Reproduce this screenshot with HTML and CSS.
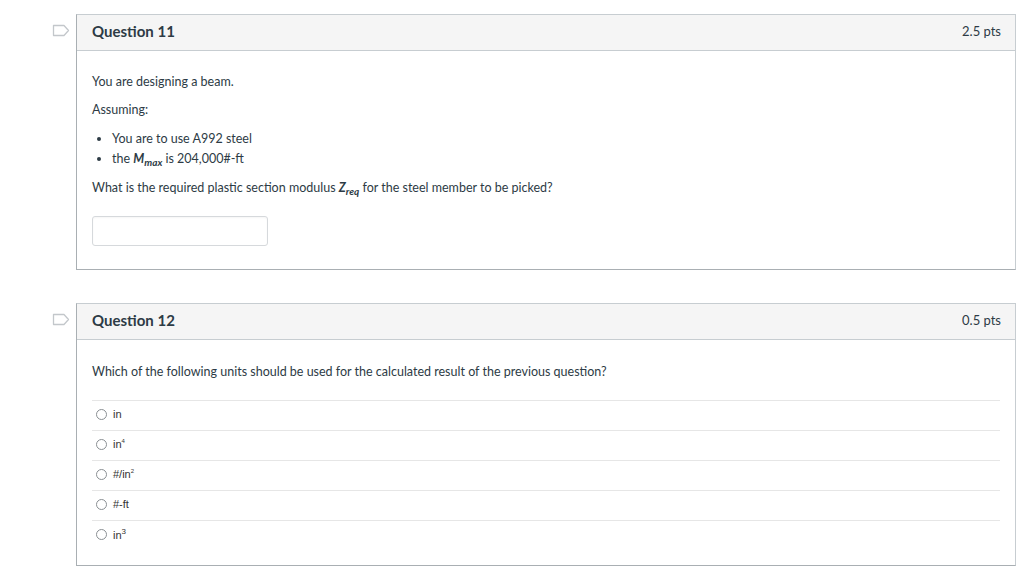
FILE: index.html
```html
<!DOCTYPE html>
<html>
<head>
<meta charset="utf-8">
<link rel="stylesheet" href="styles.css">
</head>
<body>
<div class="page">
  <div class="question q11">
    <div class="flag">
      <svg width="18" height="13" viewBox="0 0 18 13"><path d="M1.5 1.5 H12 L16.5 6.5 L12 11.5 H1.5 Z" fill="none" stroke="#c3c7cb" stroke-width="1.3" stroke-linejoin="round"/></svg>
    </div>
    <div class="card">
      <div class="card-header">
        <span class="title">Question 11</span>
        <span class="pts">2.5 pts</span>
      </div>
      <div class="card-body">
        <p>You are designing a beam.</p>
        <p>Assuming:</p>
        <ul>
          <li>You are to use A992 steel</li>
          <li>the <i class="var">M<sub>max</sub></i> is 204,000#-ft</li>
        </ul>
        <p>What is the required plastic section modulus <i class="var">Z<sub>req</sub></i> for the steel member to be picked?</p>
        <div class="answer-input"></div>
      </div>
    </div>
  </div>

  <div class="question q12">
    <div class="flag">
      <svg width="18" height="13" viewBox="0 0 18 13"><path d="M1.5 1.5 H12 L16.5 6.5 L12 11.5 H1.5 Z" fill="none" stroke="#c3c7cb" stroke-width="1.3" stroke-linejoin="round"/></svg>
    </div>
    <div class="card">
      <div class="card-header">
        <span class="title">Question 12</span>
        <span class="pts">0.5 pts</span>
      </div>
      <div class="card-body body2">
        <p>Which of the following units should be used for the calculated result of the previous question?</p>
        <div class="options">
          <div class="option"><span class="radio"></span><span class="opt-text">in</span></div>
          <div class="option"><span class="radio"></span><span class="opt-text">in<sup class="tiny">4</sup></span></div>
          <div class="option"><span class="radio"></span><span class="opt-text">#/in<sup class="tiny">2</sup></span></div>
          <div class="option"><span class="radio"></span><span class="opt-text">#-ft</span></div>
          <div class="option"><span class="radio"></span><span class="opt-text">in<sup>3</sup></span></div>
        </div>
      </div>
    </div>
  </div>
</div>
</body>
</html>
```

FILE: styles.css
```css
html, body {
  margin: 0;
  padding: 0;
  background: #ffffff;
}
body {
  font-family: Lato, "Open Sans", sans-serif;
  color: #2d3b45;
}
.page {
  padding-top: 14px;
  width: 1016px;
}
.question {
  display: flex;
  align-items: flex-start;
}
.q12 {
  margin-top: 33px;
}
.flag {
  width: 76px;
  display: flex;
  justify-content: flex-end;
  padding-right: 6px;
  padding-top: 10px;
  box-sizing: border-box;
}
.flag svg {
  display: block;
}
.card {
  flex: 1;
  border: 1px solid #c7cdd1;
  border-left-color: #a9afb3;
  border-bottom-color: #a9afb3;
}
.card-header {
  background: #f5f5f5;
  border-bottom: 1px solid #c7cdd1;
  display: flex;
  align-items: center;
  justify-content: space-between;
  padding: 0 14px 3px 15px;
  box-sizing: border-box;
  height: 36px;
}
.title {
  font-weight: 700;
  font-size: 15px;
  color: #2d3b45;
}
.pts {
  font-size: 13px;
  color: #2d3b45;
}
.card-body {
  padding: 22px 15px 23px;
  font-size: 12.5px;
  line-height: 18px;
  color: #2d3b45;
}
.card-body p {
  margin: 0 0 10px;
}
.card-body ul {
  margin: 0 0 10px;
  padding-left: 20px;
}
.card-body li {
  line-height: 20px;
}
.var {
  font-style: italic;
  font-weight: 700;
}
.var sub {
  font-size: 10px;
  vertical-align: -3px;
  line-height: 0;
}
.answer-input {
  margin-top: 19px;
  width: 174px;
  height: 28px;
  border: 1px solid #d6d9dc;
  border-radius: 3px;
  box-shadow: inset 0 1px 2px rgba(0,0,0,0.04);
}
.body2 {
  padding-top: 23px;
  padding-bottom: 14px;
}
.body2 p {
  margin-bottom: 19px;
}
.options {
  border-top: 1px solid #e6e6e6;
}
.option {
  border-bottom: 1px solid #e6e6e6;
  display: flex;
  align-items: center;
  padding-left: 4px;
  padding-bottom: 3px;
  box-sizing: border-box;
  height: 30px;
}
.option:last-child {
  border-bottom: none;
}
.radio {
  width: 9px;
  height: 9px;
  border: 1px solid #8a8f93;
  border-radius: 50%;
  margin-right: 6px;
  background: #fff;
}
.opt-text {
  font-family: "Liberation Sans", Arial, sans-serif;
  font-size: 11px;
  color: #333;
}
.opt-text sup {
  font-size: 8px;
  line-height: 0;
}
.opt-text sup.tiny {
  font-size: 6px;
}
```
